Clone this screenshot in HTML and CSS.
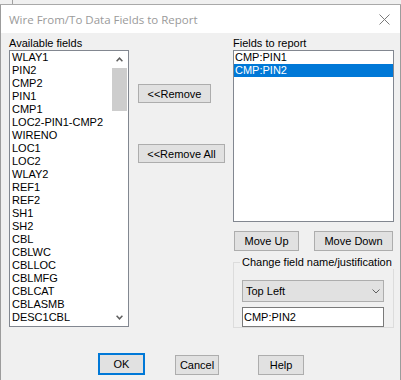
FILE: index.html
```html
<!DOCTYPE html>
<html>
<head>
<meta charset="utf-8">
<link rel="stylesheet" href="styles.css">
</head>
<body>
<div class="window">
  <div class="topband"><span class="tick"></span></div>
  <div class="frame">
    <div class="titlebar">
      <span class="title">Wire From/To Data Fields to Report</span>
      <svg class="close" width="11" height="11" viewBox="0 0 11 11"><path d="M0.5 0.5L10.5 10.5M10.5 0.5L0.5 10.5" stroke="#7a7a7a" stroke-width="1" fill="none"/></svg>
    </div>
    <div class="body">
      <div class="main">
        <div class="col-left">
          <div class="label">Available fields</div>
          <div class="list list-left">
            <div class="items">
              <div class="item">WLAY1</div>
              <div class="item">PIN2</div>
              <div class="item">CMP2</div>
              <div class="item">PIN1</div>
              <div class="item">CMP1</div>
              <div class="item">LOC2-PIN1-CMP2</div>
              <div class="item">WIRENO</div>
              <div class="item">LOC1</div>
              <div class="item">LOC2</div>
              <div class="item">WLAY2</div>
              <div class="item">REF1</div>
              <div class="item">REF2</div>
              <div class="item">SH1</div>
              <div class="item">SH2</div>
              <div class="item">CBL</div>
              <div class="item">CBLWC</div>
              <div class="item">CBLLOC</div>
              <div class="item">CBLMFG</div>
              <div class="item">CBLCAT</div>
              <div class="item">CBLASMB</div>
              <div class="item">DESC1CBL</div>
            </div>
            <div class="scrollbar">
              <div class="sb-arrow"><svg width="7" height="5" viewBox="0 0 7 5"><path d="M0.6 4.2L3.5 1.2L6.4 4.2" fill="none" stroke="#606060" stroke-width="1.5"/></svg></div>
              <div class="thumb"></div>
              <div class="sb-space"></div>
              <div class="sb-arrow"><svg width="7" height="5" viewBox="0 0 7 5"><path d="M0.6 0.8L3.5 3.8L6.4 0.8" fill="none" stroke="#606060" stroke-width="1.5"/></svg></div>
            </div>
          </div>
        </div>
        <div class="col-mid">
          <button class="btn remove">&lt;&lt;Remove</button>
          <button class="btn remove-all">&lt;&lt;Remove All</button>
        </div>
        <div class="col-right">
          <div class="label">Fields to report</div>
          <div class="list list-right">
            <div class="item">CMP:PIN1</div>
            <div class="item sel">CMP:PIN2</div>
          </div>
          <div class="move-row">
            <button class="btn move-up">Move Up</button>
            <button class="btn move-down">Move Down</button>
          </div>
          <fieldset class="group">
            <legend>Change field name/justification</legend>
            <div class="select">
              <span>Top Left</span>
              <svg width="8" height="5" viewBox="0 0 8 5"><path d="M0.5 0.5L4 4L7.5 0.5" fill="none" stroke="#606060" stroke-width="1"/></svg>
            </div>
            <div class="edit">CMP:PIN2</div>
          </fieldset>
        </div>
      </div>
      <div class="footer">
        <button class="btn ok">OK</button>
        <button class="btn cancel">Cancel</button>
        <button class="btn help">Help</button>
      </div>
    </div>
  </div>
</div>
</body>
</html>
```
FILE: styles.css
```css
* { box-sizing: border-box; }
body {
  margin: 0;
  font-family: "Liberation Sans", Arial, sans-serif;
  font-size: 11px;
  color: #000;
  background: #f0f0f0;
}
.window {
  width: 401px;
  height: 380px;
  background: #f0f0f0;
  overflow: hidden;
  display: flex;
  flex-direction: column;
}
.topband {
  height: 5px;
  background: #f0f0f0;
  border-bottom: 1px solid #a9a9a9;
  display: flex;
}
.tick {
  width: 1px;
  height: 4px;
  margin-left: 12px;
  background: #a0a0a0;
}
.frame {
  flex: 1;
  display: flex;
  flex-direction: column;
  border-left: 1px solid #9c9c9c;
  border-right: 1px solid #9c9c9c;
}
.titlebar {
  height: 28px;
  background: #fff;
  display: flex;
  align-items: center;
  justify-content: space-between;
  padding: 0 10px 0 8px;
}
.title {
  font-family: "Open Sans", "Noto Sans", sans-serif;
  font-size: 11.5px;
  color: #9a9a9a;
}
.close { display: block; }
.body {
  flex: 1;
  padding: 4px 0 0 8px;
}
.main {
  display: flex;
  align-items: flex-start;
}
.label {
  height: 13px;
  line-height: 13px;
  white-space: nowrap;
}
.col-left { width: 120px; }
.list {
  background: #fff;
  border: 1px solid #828790;
}
.list-left {
  height: 277px;
  display: flex;
}
.items {
  flex: 1;
  padding-left: 2px;
}
.item {
  height: 13px;
  line-height: 13px;
  white-space: nowrap;
}
.scrollbar {
  width: 17px;
  display: flex;
  flex-direction: column;
  align-items: center;
}
.sb-arrow {
  height: 17px;
  width: 17px;
  display: flex;
  align-items: center;
  justify-content: center;
}
.sb-arrow svg { display: block; }
.thumb {
  width: 15px;
  height: 43px;
  background: #cdcdcd;
}
.sb-space { flex: 1; }
.col-mid {
  margin-left: 9px;
  padding-top: 47px;
  display: flex;
  flex-direction: column;
  align-items: flex-start;
}
.btn {
  font-family: inherit;
  font-size: 11px;
  color: #000;
  background: #e1e1e1;
  border: 1px solid #adadad;
  padding: 0;
  margin: 0;
  height: 19px;
}
.remove { width: 73px; }
.remove-all { width: 87px; margin-top: 41px; }
.col-right {
  margin-left: 8px;
  width: 161px;
}
.list-right { height: 172px; }
.list-right .item { padding-left: 1px; }
.item.sel {
  background: #0078d7;
  color: #fff;
}
.move-row {
  display: flex;
  gap: 15px;
  margin-top: 9px;
  padding-left: 1px;
}
.move-up { width: 65px; height: 20px; }
.move-down { width: 79px; height: 20px; }
.group {
  margin: 5px 0 0 0;
  padding: 0 0 0 8px;
  width: 161px;
  min-width: 0;
  border: 1px solid #dcdcdc;
}
.group legend {
  padding: 0 2px;
  margin-left: -2px;
  height: 13px;
  line-height: 13px;
  white-space: nowrap;
}
.select {
  width: 142px;
  height: 22px;
  margin-top: 11px;
  background: #e1e1e1;
  border: 1px solid #adadad;
  display: flex;
  align-items: center;
  justify-content: space-between;
  padding: 0 3px 0 3px;
}
.select svg { display: block; }
.edit {
  width: 142px;
  height: 20px;
  margin-top: 5px;
  background: #fff;
  border: 1px solid #7a7a7a;
  padding-left: 1px;
  line-height: 18px;
}
.footer {
  display: flex;
  align-items: flex-end;
  margin-top: 25px;
  padding-left: 89px;
}
.ok {
  width: 47px;
  height: 22px;
  border: 2px solid #0078d7;
}
.cancel {
  width: 44px;
  height: 20px;
  margin-left: 30px;
}
.help {
  width: 46px;
  height: 20px;
  margin-left: 39px;
}
```
